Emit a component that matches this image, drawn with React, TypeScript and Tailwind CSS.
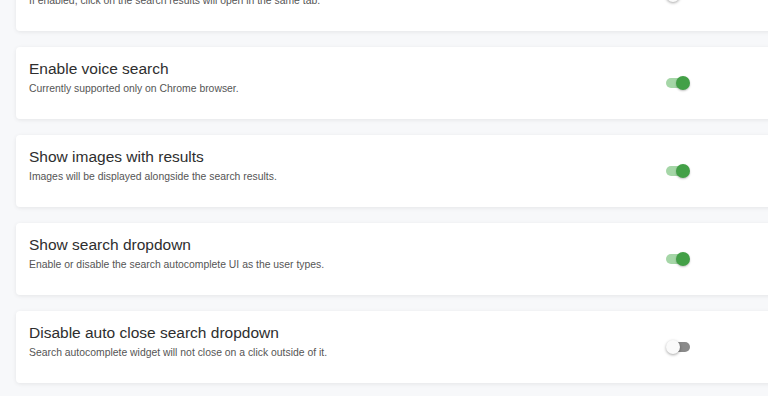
const settings = [
  {
    title: "Open results in the same tab",
    desc: "If enabled, click on the search results will open in the same tab.",
    on: false,
  },
  {
    title: "Enable voice search",
    desc: "Currently supported only on Chrome browser.",
    on: true,
  },
  {
    title: "Show images with results",
    desc: "Images will be displayed alongside the search results.",
    on: true,
  },
  {
    title: "Show search dropdown",
    desc: "Enable or disable the search autocomplete UI as the user types.",
    on: true,
  },
  {
    title: "Disable auto close search dropdown",
    desc: "Search autocomplete widget will not close on a click outside of it.",
    on: false,
  },
];

function Toggle({ on }: { on: boolean }) {
  return (
    <div className="relative w-[24px] h-[14px] flex items-center">
      <div
        className={
          on
            ? "w-[22px] h-[10px] rounded-full bg-[#a5d6a7]"
            : "w-[22px] h-[10px] ml-[2px] rounded-full bg-[#8a8a8a]"
        }
      />
      <div
        className={
          on
            ? "absolute right-0 top-0 w-[14px] h-[14px] rounded-full bg-[#43a047] shadow-[0_1px_2px_rgba(0,0,0,0.25)]"
            : "absolute left-0 top-0 w-[14px] h-[14px] rounded-full bg-[#fafafa] shadow-[0_1px_3px_rgba(0,0,0,0.35)]"
        }
      />
    </div>
  );
}

export default function App() {
  return (
    <div
      className="h-[396px] w-[768px] overflow-hidden bg-[#f7f8fa]"
      style={{ fontFamily: '"Liberation Sans", Arial, sans-serif' }}
    >
      <div className="-mt-[41px] flex flex-col gap-4 pl-4">
        {settings.map((s) => (
          <div
            key={s.title}
            className="w-[800px] h-[72px] shrink-0 flex items-start bg-white rounded-[4px] shadow-[0_1px_4px_rgba(0,0,0,0.08)] pl-[13px] pt-[12px]"
          >
            <div className="w-[637px]">
              <div className="text-[15.5px] leading-[19px] text-[#2e2e2e]">{s.title}</div>
              <div className="mt-[4px] text-[10.4px] leading-[14px] text-[#555]">{s.desc}</div>
            </div>
            <div className="mt-[17px]">
              <Toggle on={s.on} />
            </div>
          </div>
        ))}
      </div>
    </div>
  );
}
